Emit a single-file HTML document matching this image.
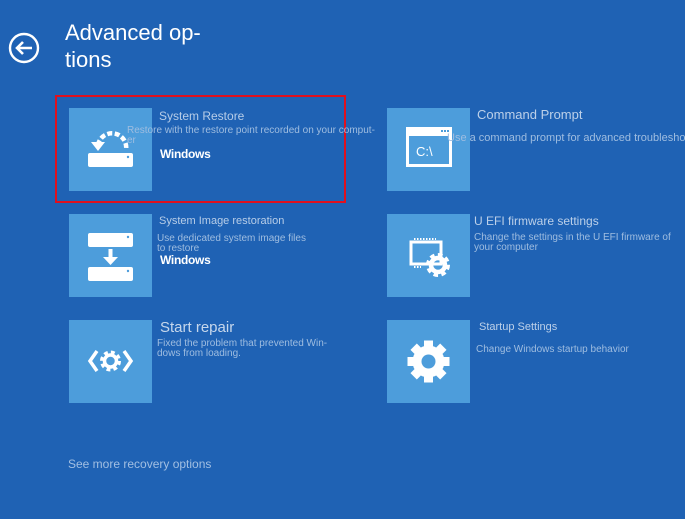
<!DOCTYPE html>
<html><head><style>
body{margin:0;width:685px;height:519px;background:#1f62b4;font-family:"Liberation Sans",sans-serif;position:relative;overflow:hidden;color:#b5cbe6}
.a{position:absolute;white-space:nowrap}
.t{position:absolute;width:83px;height:83px;background:#4d9ddb}
.t svg{position:absolute;left:0;top:0}
.h{font-size:12px;color:#b7cde8}
.d{font-size:10px;color:#9fbde0;line-height:10px}
.w{font-size:12px;color:#fff;font-weight:bold;letter-spacing:-0.3px}
</style></head><body>
<svg class="a" style="left:8px;top:32px" width="32" height="32"><circle cx="16" cy="16" r="14" fill="none" stroke="#fff" stroke-width="2.4"/><path d="M24 16H9M15 10l-6 6 6 6" fill="none" stroke="#fff" stroke-width="2.6"/></svg>
<div class="a" style="left:65px;top:19px;font-size:22px;color:#fff;line-height:27px">Advanced op-<br>tions</div>
<div class="a" style="left:55px;top:95px;width:287px;height:104px;border:2px solid #e0101e"></div>

<div class="t" style="left:69px;top:108px"><svg width="83" height="83"><path d="M29 37 A14 14 0 1 1 57 42" fill="none" stroke="#fff" stroke-width="4.5" stroke-dasharray="5 2.5"/><path d="M22 34l7 9 7-9z" fill="#fff"/><rect x="19" y="45" width="45" height="14" rx="2" fill="#fff"/><circle cx="59" cy="49" r="1.2" fill="#4d9ddb"/></svg></div>
<div class="a h" style="left:159px;top:109px">System Restore</div>
<div class="a d" style="left:127px;top:126px">Restore with the restore point recorded on your comput-<br>er</div>
<div class="a w" style="left:160px;top:147px">Windows</div>

<div class="t" style="left:69px;top:214px"><svg width="83" height="83"><rect x="19" y="19" width="45" height="14" rx="2" fill="#fff"/><circle cx="59" cy="23" r="1.2" fill="#4d9ddb"/><path d="M41.5 35v11" stroke="#fff" stroke-width="4"/><path d="M34 43l7.5 8 7.5-8z" fill="#fff"/><rect x="19" y="53" width="45" height="14" rx="2" fill="#fff"/><circle cx="59" cy="57" r="1.2" fill="#4d9ddb"/></svg></div>
<div class="a h" style="left:159px;top:215px;font-size:11px">System Image restoration</div>
<div class="a d" style="left:157px;top:234px">Use dedicated system image files<br>to restore</div>
<div class="a w" style="left:160px;top:253px">Windows</div>

<div class="t" style="left:69px;top:320px"><svg width="83" height="83"><path d="M28 31l-7 10 7 10M55 31l7 10-7 10" stroke="#fff" stroke-width="3.5" fill="none"/><circle cx="41.5" cy="41" r="8" fill="none" stroke="#fff" stroke-width="5" stroke-dasharray="3.5 2.8"/><circle cx="41.5" cy="41" r="6" fill="none" stroke="#fff" stroke-width="3.5"/></svg></div>
<div class="a" style="left:160px;top:319px;font-size:15px;color:#c6d7ec">Start repair</div>
<div class="a d" style="left:157px;top:339px">Fixed the problem that prevented Win-<br>dows from loading.</div>

<div class="t" style="left:387px;top:108px"><svg width="83" height="83"><rect x="19" y="19" width="46" height="40" fill="#fff"/><rect x="22" y="28" width="40" height="28" fill="#4d9ddb"/><path d="M54 23h8" stroke="#4d9ddb" stroke-width="2" stroke-dasharray="2 1"/><text x="29" y="48" font-family="Liberation Sans" font-size="13" fill="#fff">C:\</text></svg></div>
<div class="a" style="left:477px;top:107px;font-size:13px;color:#bcd0e9">Command Prompt</div>
<div class="a d" style="left:447px;top:133px;font-size:11px">Use a command prompt for advanced troubleshooting</div>

<div class="t" style="left:387px;top:214px"><svg width="83" height="83"><rect x="24" y="28" width="30" height="22" fill="none" stroke="#fff" stroke-width="3"/><path d="M27 25h22M27 53h7" stroke="#fff" stroke-width="2" stroke-dasharray="1.5 1.5"/><circle cx="51" cy="51" r="9" fill="none" stroke="#fff" stroke-width="6" stroke-dasharray="4 3"/><circle cx="51" cy="51" r="7" fill="none" stroke="#fff" stroke-width="4.5"/></svg></div>
<div class="a" style="left:474px;top:214px;font-size:12px;color:#bcd0e9">U EFI firmware settings</div>
<div class="a d" style="left:474px;top:233px">Change the settings in the U EFI firmware of<br>your computer</div>

<div class="t" style="left:387px;top:320px"><svg width="83" height="83"><g fill="#fff" transform="translate(41.5 41.5)"><rect x="-4.5" y="-21" width="9" height="42"/><rect x="-4.5" y="-21" width="9" height="42" transform="rotate(45)"/><rect x="-4.5" y="-21" width="9" height="42" transform="rotate(90)"/><rect x="-4.5" y="-21" width="9" height="42" transform="rotate(135)"/><circle r="16"/><circle r="7" fill="#4d9ddb"/></g></svg></div>
<div class="a" style="left:479px;top:321px;font-size:11px;color:#bcd0e9">Startup Settings</div>
<div class="a d" style="left:476px;top:345px">Change Windows startup behavior</div>

<div class="a" style="left:68px;top:457px;font-size:12px;color:#a2bfe2">See more recovery options</div>
</body></html>
